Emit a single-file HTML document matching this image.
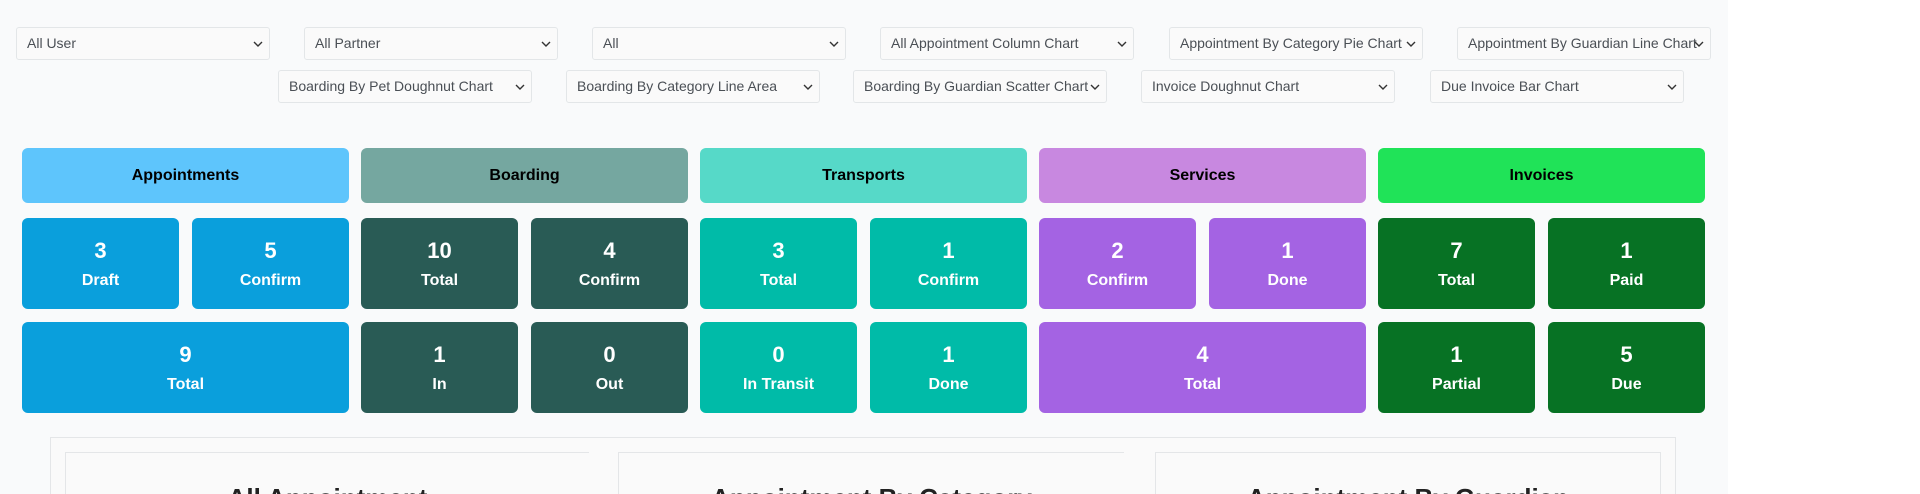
<!DOCTYPE html>
<html style="overflow:hidden;width:1920px;height:494px"><head><meta charset="utf-8"><style>
*{box-sizing:border-box;margin:0;padding:0}
body{width:1920px;height:494px;overflow:hidden;background:#fff;font-family:"Liberation Sans",sans-serif;position:relative}
.bg{position:absolute;left:0;top:0;width:1728px;height:494px;background:#f9fafb}
.sel{position:absolute;width:254px;height:33px;background:#fafafa;border:1px solid #e3e6e8;border-radius:3px;font-size:14px;color:#4a4f55;padding:7px 10px;white-space:nowrap;overflow:hidden}
.sel svg{position:absolute;right:6px;top:13px}
.h,.c{position:absolute;border-radius:6px;display:flex;flex-direction:column;align-items:center;justify-content:center;font-weight:bold}
.h{height:55px;top:148px;font-size:16px;color:#000}
.c{height:91px;color:#fff}
.c b{font-size:22px;margin-bottom:8px}
.c span{font-size:16px}
.box{position:absolute;border:1px solid #e4e6e8;background:#fafafa}
.t{position:absolute;font-size:26px;color:#222;width:100%;text-align:center;font-weight:bold}
.clip{position:absolute;left:0;top:0;width:1920px;height:494px;overflow:hidden}
</style></head><body><div class="clip"><div class="bg"></div>
<div class="sel" style="left:16px;top:27px">All User<svg width="10" height="6"><path d="M1 1l4 4 4-4" stroke="#333" fill="none" stroke-width="1.4"/></svg></div>
<div class="sel" style="left:304px;top:27px">All Partner<svg width="10" height="6"><path d="M1 1l4 4 4-4" stroke="#333" fill="none" stroke-width="1.4"/></svg></div>
<div class="sel" style="left:592px;top:27px">All<svg width="10" height="6"><path d="M1 1l4 4 4-4" stroke="#333" fill="none" stroke-width="1.4"/></svg></div>
<div class="sel" style="left:880px;top:27px">All Appointment Column Chart<svg width="10" height="6"><path d="M1 1l4 4 4-4" stroke="#333" fill="none" stroke-width="1.4"/></svg></div>
<div class="sel" style="left:1169px;top:27px">Appointment By Category Pie Chart<svg width="10" height="6"><path d="M1 1l4 4 4-4" stroke="#333" fill="none" stroke-width="1.4"/></svg></div>
<div class="sel" style="left:1457px;top:27px">Appointment By Guardian Line Chart<svg width="10" height="6"><path d="M1 1l4 4 4-4" stroke="#333" fill="none" stroke-width="1.4"/></svg></div>
<div class="sel" style="left:278px;top:70px">Boarding By Pet Doughnut Chart<svg width="10" height="6"><path d="M1 1l4 4 4-4" stroke="#333" fill="none" stroke-width="1.4"/></svg></div>
<div class="sel" style="left:566px;top:70px">Boarding By Category Line Area<svg width="10" height="6"><path d="M1 1l4 4 4-4" stroke="#333" fill="none" stroke-width="1.4"/></svg></div>
<div class="sel" style="left:853px;top:70px">Boarding By Guardian Scatter Chart<svg width="10" height="6"><path d="M1 1l4 4 4-4" stroke="#333" fill="none" stroke-width="1.4"/></svg></div>
<div class="sel" style="left:1141px;top:70px">Invoice Doughnut Chart<svg width="10" height="6"><path d="M1 1l4 4 4-4" stroke="#333" fill="none" stroke-width="1.4"/></svg></div>
<div class="sel" style="left:1430px;top:70px">Due Invoice Bar Chart<svg width="10" height="6"><path d="M1 1l4 4 4-4" stroke="#333" fill="none" stroke-width="1.4"/></svg></div>

<div class="h" style="left:22px;width:327px;background:#5ec5fc">Appointments</div>
<div class="h" style="left:361px;width:327px;background:#75a7a0">Boarding</div>
<div class="h" style="left:700px;width:327px;background:#56d9c8">Transports</div>
<div class="h" style="left:1039px;width:327px;background:#c888e0">Services</div>
<div class="h" style="left:1378px;width:327px;background:#20e358">Invoices</div>

<div class="c" style="left:22px;top:218px;width:157px;background:#0a9fdc"><b>3</b><span>Draft</span></div>
<div class="c" style="left:192px;top:218px;width:157px;background:#0a9fdc"><b>5</b><span>Confirm</span></div>
<div class="c" style="left:22px;top:322px;width:327px;background:#0a9fdc"><b>9</b><span>Total</span></div>

<div class="c" style="left:361px;top:218px;width:157px;background:#295b55"><b>10</b><span>Total</span></div>
<div class="c" style="left:531px;top:218px;width:157px;background:#295b55"><b>4</b><span>Confirm</span></div>
<div class="c" style="left:361px;top:322px;width:157px;background:#295b55"><b>1</b><span>In</span></div>
<div class="c" style="left:531px;top:322px;width:157px;background:#295b55"><b>0</b><span>Out</span></div>

<div class="c" style="left:700px;top:218px;width:157px;background:#00bba8"><b>3</b><span>Total</span></div>
<div class="c" style="left:870px;top:218px;width:157px;background:#00bba8"><b>1</b><span>Confirm</span></div>
<div class="c" style="left:700px;top:322px;width:157px;background:#00bba8"><b>0</b><span>In Transit</span></div>
<div class="c" style="left:870px;top:322px;width:157px;background:#00bba8"><b>1</b><span>Done</span></div>

<div class="c" style="left:1039px;top:218px;width:157px;background:#a463e3"><b>2</b><span>Confirm</span></div>
<div class="c" style="left:1209px;top:218px;width:157px;background:#a463e3"><b>1</b><span>Done</span></div>
<div class="c" style="left:1039px;top:322px;width:327px;background:#a463e3"><b>4</b><span>Total</span></div>

<div class="c" style="left:1378px;top:218px;width:157px;background:#077224"><b>7</b><span>Total</span></div>
<div class="c" style="left:1548px;top:218px;width:157px;background:#077224"><b>1</b><span>Paid</span></div>
<div class="c" style="left:1378px;top:322px;width:157px;background:#077224"><b>1</b><span>Partial</span></div>
<div class="c" style="left:1548px;top:322px;width:157px;background:#077224"><b>5</b><span>Due</span></div>

<div class="box" style="left:50px;top:437px;width:1626px;height:57px;border-bottom:none"></div>
<div class="box" style="left:65px;top:452px;width:524px;height:42px;border-right:none;border-bottom:none"><div class="t" style="top:30px">All Appointment</div></div>
<div class="box" style="left:618px;top:452px;width:506px;height:42px;border-right:none;border-bottom:none"><div class="t" style="top:30px">Appointment By Category</div></div>
<div class="box" style="left:1155px;top:452px;width:506px;height:42px;border-bottom:none"><div class="t" style="top:30px">Appointment By Guardian</div></div>
</div></body></html>
